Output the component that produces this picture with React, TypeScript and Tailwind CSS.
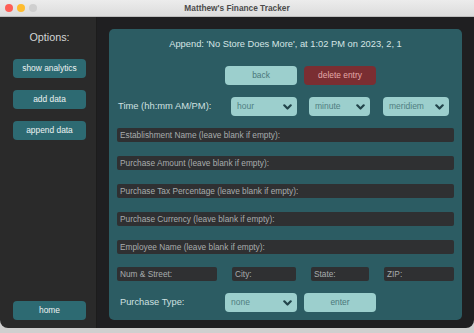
import React from "react";

function Chevron() {
    return (
        <svg width="9" height="6" viewBox="0 0 9 6" className="shrink-0">
            <polyline points="1.3,1.3 4.5,4.5 7.7,1.3" fill="none" stroke="#22444a" strokeWidth="2.2" strokeLinecap="round" strokeLinejoin="round" />
        </svg>
    );
}

function Select({ label, w }: { label: string; w: string }) {
    return (
        <div className={`${w} h-[19px] rounded-[4px] bg-[#9ccfcd] flex items-center justify-between pl-[6px] pr-[5px] text-[8.5px] text-[#4f7e81]`}>
            <span>{label}</span>
            <Chevron />
        </div>
    );
}

function Field({ text, w = "w-full" }: { text: string; w?: string }) {
    return (
        <div className={`${w} h-[14px] rounded-[2px] bg-[#2f3032] flex items-center px-[3px] text-[8.3px] text-[#a8acad]`}>
            {text}
        </div>
    );
}

function SideButton({ label }: { label: string }) {
    return (
        <div className="w-[73px] h-[19px] rounded-[4px] bg-[#2d6a72] flex items-center justify-center text-[8.4px] text-[#eef3f3]">
            {label}
        </div>
    );
}

export default function App() {
    const fields = [
        "Establishment Name (leave blank if empty):",
        "Purchase Amount (leave blank if empty):",
        "Purchase Tax Percentage (leave blank if empty):",
        "Purchase Currency (leave blank if empty):",
        "Employee Name (leave blank if empty):",
    ];

    return (
        <div className="w-[474px] h-[333px] bg-[#cfcfcf] overflow-hidden" style={{ fontFamily: '"Liberation Sans", Arial, sans-serif' }}>
            <div className="w-[474px] h-[328px] flex flex-col rounded-b-[8px] overflow-hidden">
                {/* title bar */}
                <div className="h-[17px] bg-gradient-to-b from-[#ececec] to-[#dcdcdc] border-b border-[#bdbdbd] flex items-center relative">
                    <div className="flex gap-[4px] pl-[5px]">
                        <div className="w-[8px] h-[8px] rounded-full bg-[#fe5f57]" />
                        <div className="w-[8px] h-[8px] rounded-full bg-[#febc2e]" />
                        <div className="w-[8px] h-[8px] rounded-full bg-[#cfcfcf]" />
                    </div>
                    <div className="absolute inset-0 flex items-center justify-center text-[8.3px] font-bold text-[#4b4b4b]">
                        Matthew's Finance Tracker
                    </div>
                </div>

                <div className="flex-1 flex">
                    {/* sidebar */}
                    <div className="w-[97px] bg-[#2a2a2a] border-r border-[#1c1c1c] flex flex-col pl-[13px] pt-[13px] pb-[8px]">
                        <div className="w-[73px] text-center text-[10.8px] leading-[14px] text-[#d3d6d6]">Options:</div>
                        <div className="flex flex-col gap-[12px] mt-[15px]">
                            <SideButton label="show analytics" />
                            <SideButton label="add data" />
                            <SideButton label="append data" />
                        </div>
                        <div className="mt-auto">
                            <SideButton label="home" />
                        </div>
                    </div>

                    {/* main */}
                    <div className="flex-1 bg-[#1f1f21] pl-[12px] pt-[12px]">
                        <div className="w-[353px] h-[291px] rounded-[5px] bg-[#2c5c63] flex flex-col px-[8px]">
                            <div className="text-center text-[9.3px] leading-[12px] text-[#d5e5e5] mt-[9px]">
                                Append: 'No Store Does More', at 1:02 PM on 2023, 2, 1
                            </div>

                            <div className="flex gap-[7px] pl-[108px] mt-[16px]">
                                <div className="w-[72px] h-[19px] rounded-[4px] bg-[#9ccfcd] flex items-center justify-center text-[8.4px] text-[#4a777a]">back</div>
                                <div className="w-[72px] h-[19px] rounded-[4px] bg-[#7a2e32] flex items-center justify-center text-[8.4px] text-[#e3a9a9]">delete entry</div>
                            </div>

                            <div className="flex items-center mt-[12px]">
                                <div className="w-[114px] pl-[1px] text-[9.4px] text-[#cfe0e0]">Time (hh:mm AM/PM):</div>
                                <Select label="hour" w="w-[66px]" />
                                <div className="w-[12px]" />
                                <Select label="minute" w="w-[61px]" />
                                <div className="w-[13px]" />
                                <Select label="meridiem" w="w-[66px]" />
                            </div>

                            <div className="flex flex-col gap-[14px] mt-[12px]">
                                {fields.map((f) => (
                                    <Field key={f} text={f} />
                                ))}
                            </div>

                            <div className="flex gap-[15px] mt-[13px]">
                                <Field text="Num & Street:" w="w-[100px]" />
                                <Field text="City:" w="w-[64px]" />
                                <Field text="State:" w="w-[58px]" />
                                <Field text="ZIP:" w="w-[70px]" />
                            </div>

                            <div className="flex items-center mt-[12px]">
                                <div className="w-[108px] pl-[3px] text-[9.3px] text-[#cfe0e0]">Purchase Type:</div>
                                <Select label="none" w="w-[72px]" />
                                <div className="w-[7px]" />
                                <div className="w-[72px] h-[19px] rounded-[4px] bg-[#9ccfcd] flex items-center justify-center text-[8.4px] text-[#4a777a]">enter</div>
                            </div>
                        </div>
                    </div>
                </div>
            </div>
        </div>
    );
}
